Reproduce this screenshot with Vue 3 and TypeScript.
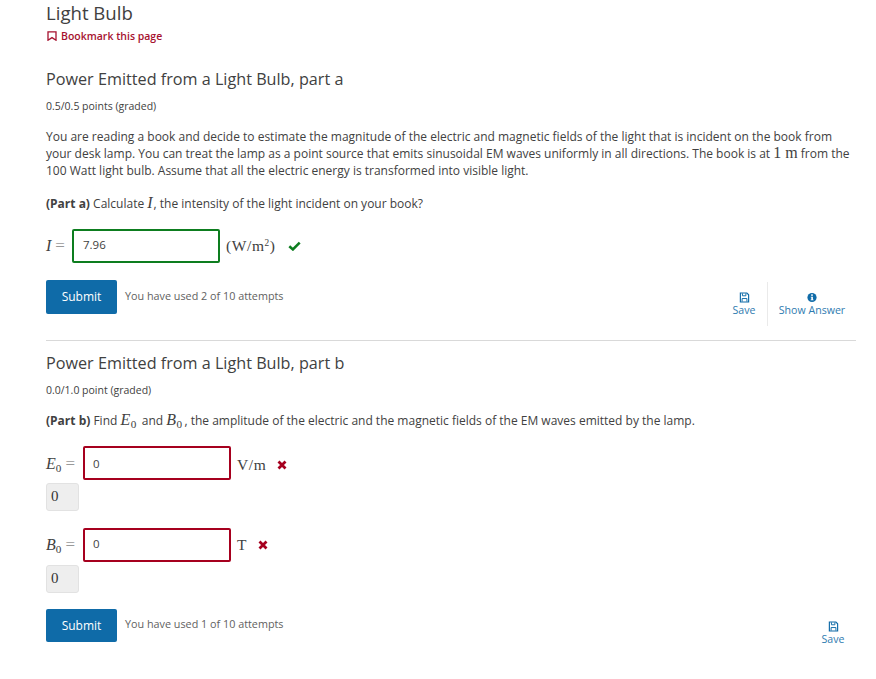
<script setup lang="ts">
const floppy = "M2 1.5h9.5L14 4v10.5H2z";
</script>

<template>
  <main class="page">
    <h1 class="title">Light Bulb</h1>
    <a class="bookmark">
      <svg class="bm-icon" viewBox="0 0 10 10" width="10" height="10"><path d="M1 .8h8v8.4L5 6.6 1 9.2z" fill="none" stroke="#a6112f" stroke-width="1.3"/></svg>
      <span>Bookmark this page</span>
    </a>

    <section class="problem first">
      <h2 class="heading">Power Emitted from a Light Bulb, part a</h2>
      <p class="points">0.5/0.5 points (graded)</p>
      <p class="text para">You are reading a book and decide to estimate the magnitude of the electric and magnetic fields of the light that is incident on the book from your desk lamp. You can treat the lamp as a point source that emits sinusoidal EM waves uniformly in all directions. The book is at <span class="math big">1 m</span> from the 100 Watt light bulb. Assume that all the electric energy is transformed into visible light.</p>
      <p class="text question"><b>(Part a)</b> Calculate <i class="math big wide-i">I</i>, the intensity of the light incident on your book?</p>

      <div class="answer row-a">
        <span class="math label"><span class="sym"><i>I</i></span><span class="eq">=</span></span>
        <div class="input ok">7.96</div>
        <span class="math unit">(W/m<sup>2</sup>)</span>
        <svg class="mark" viewBox="0 0 13 10" width="13" height="10"><path d="M1.3 5.2l3.6 3.2 6.8-6.8" fill="none" stroke="#0d7d1f" stroke-width="2.6"/></svg>
      </div>

      <div class="actions one">
        <button class="submit">Submit</button>
        <span class="attempts">You have used 2 of 10 attempts</span>
        <div class="tools">
          <div class="tool save">
            <svg viewBox="0 0 16 16" width="11" height="11"><path :d="floppy" fill="none" stroke="#0f6ba8" stroke-width="1.7"/><path d="M5 2v3.5h5V2M4.5 14V9.5h7V14" fill="none" stroke="#0f6ba8" stroke-width="1.4"/></svg>
            <span>Save</span>
          </div>
          <div class="tool show">
            <svg viewBox="0 0 12 12" width="10" height="10"><circle cx="6" cy="6" r="5.5" fill="#0f6ba8"/><rect x="5" y="2.2" width="2" height="1.8" fill="#fff"/><path d="M4.5 5h2.6v3.4h.7v1H4.4v-1h.8V6h-.7z" fill="#fff"/></svg>
            <span>Show Answer</span>
          </div>
        </div>
      </div>
    </section>

    <hr class="rule" />

    <section class="problem">
      <h2 class="heading">Power Emitted from a Light Bulb, part b</h2>
      <p class="points">0.0/1.0 point (graded)</p>
      <p class="text question-b"><b>(Part b)</b> Find <span class="math big inl"><i>E</i><sub>0</sub></span> and <span class="math big inl"><i>B</i><sub>0</sub></span>, the amplitude of the electric and the magnetic fields of the EM waves emitted by the lamp.</p>

      <div class="answer row-e">
        <span class="math label"><span class="sym"><i>E</i><sub>0</sub></span><span class="eq">=</span></span>
        <div class="input bad">0</div>
        <span class="math unit">V/m</span>
        <svg class="mark x" viewBox="0 0 10 10" width="10" height="10"><path d="M1.5 1.5l7 7m0-7l-7 7" stroke="#a6001e" stroke-width="2.8"/></svg>
      </div>
      <div class="preview math">0</div>

      <div class="answer row-b">
        <span class="math label"><span class="sym"><i>B</i><sub>0</sub></span><span class="eq">=</span></span>
        <div class="input bad">0</div>
        <span class="math unit">T</span>
        <svg class="mark x" viewBox="0 0 10 10" width="10" height="10"><path d="M1.5 1.5l7 7m0-7l-7 7" stroke="#a6001e" stroke-width="2.8"/></svg>
      </div>
      <div class="preview math">0</div>

      <div class="actions two">
        <button class="submit">Submit</button>
        <span class="attempts">You have used 1 of 10 attempts</span>
        <div class="tools">
          <div class="tool save last">
            <svg viewBox="0 0 16 16" width="11" height="11"><path :d="floppy" fill="none" stroke="#0f6ba8" stroke-width="1.7"/><path d="M5 2v3.5h5V2M4.5 14V9.5h7V14" fill="none" stroke="#0f6ba8" stroke-width="1.4"/></svg>
            <span>Save</span>
          </div>
        </div>
      </div>
    </section>
  </main>
</template>

<style scoped>
.page {
  box-sizing: border-box;
  width: 876px;
  min-height: 679px;
  padding: 1px 20px 0 46px;
  background: #fff;
  color: #414141;
  font-family: "Open Sans", sans-serif;
}
.title {
  margin: 0;
  font-size: 18.6px;
  line-height: 24px;
  font-weight: 400;
  color: #414141;
}
.bookmark {
  display: flex;
  align-items: center;
  gap: 4px;
  margin-top: 3px;
  height: 16px;
  font-size: 10.5px;
  font-weight: 600;
  color: #a6112f;
}
.bm-icon { margin-left: 1px; }
.problem.first { margin-top: 24px; }
.heading {
  margin: 0;
  font-size: 16.2px;
  line-height: 22px;
  font-weight: 400;
  color: #414141;
}
.points {
  margin: 9px 0 0;
  font-size: 10.5px;
  line-height: 14px;
  color: #414141;
}
.text {
  font-size: 12px;
  line-height: 17px;
  color: #414141;
}
.text b { font-weight: 700; }
.para { margin: 15px 0 0; width: 810px; }
.question { margin: 16px 0 0; }
.question-b { margin: 15px 0 0; }
.math { font-family: "Liberation Serif", serif; }
.big { font-size: 16px; line-height: 1; }
.wide-i { margin-right: 1px; }
.inl { margin: 0 2px 0 0; letter-spacing: .4px; }
sub { font-size: 0.7em; line-height: 0; vertical-align: -0.25em; }
sup { font-size: 0.6em; line-height: 0; vertical-align: 0.55em; }
.answer { display: flex; align-items: center; height: 34px; }
.row-a { margin-top: 17px; }
.row-e { margin-top: 17px; }
.row-b { margin-top: 17px; }
.label {
  display: flex;
  align-items: center;
  gap: 4px;
  font-size: 16px;
  white-space: nowrap;
}
.row-a .label { width: 26px; }
.row-e .label, .row-b .label { width: 37px; }
.eq { color: #999; font-size: 17px; }
.input {
  box-sizing: border-box;
  width: 148px;
  height: 34px;
  padding-left: 9px;
  display: flex;
  align-items: center;
  font-size: 11.5px;
  border: 2px solid;
  border-radius: 2px;
  background: #fff;
  color: #414141;
}
.row-a .input, .row-b .input { padding-bottom: 3px; }
.row-e .input { padding-left: 8px; }
.row-b .input { padding-left: 8px; }
.ok { border-color: #0d7d1f; }
.bad { border-color: #a6001e; }
.unit { margin-left: 6px; font-size: 15.5px; letter-spacing: .6px; color: #414141; }
.mark { margin-left: 12px; }
.x { margin-left: 11px; }
.row-e .unit, .row-e .mark { margin-top: 4px; }
.row-e .label { padding-top: 1px; }
.preview {
  box-sizing: border-box;
  width: 33px;
  height: 28px;
  margin-top: 3px;
  padding: 0 0 1px 4px;
  display: flex;
  align-items: center;
  background: #eee;
  border: 1px solid #e2e2e2;
  border-radius: 3px;
  font-size: 15px;
  color: #333;
}
.actions { display: flex; align-items: flex-start; }
.one { margin-top: 17px; }
.two { margin-top: 16px; }
.submit {
  width: 71px;
  height: 34px;
  padding: 0 0 1px;
  border: none;
  border-radius: 2px;
  background: #0f6ba8;
  color: #fff;
  font-family: inherit;
  font-size: 12px;
}
.two .submit { height: 33px; }
.attempts {
  margin-left: 8px;
  line-height: 32px;
  font-size: 10.8px;
  color: #5f5f5f;
}
.two .attempts { margin-top: -1px; }
.tools { display: flex; margin-left: auto; margin-top: 2px; }
.tool {
  display: flex;
  flex-direction: column;
  align-items: center;
  font-size: 10.6px;
  line-height: 14px;
  color: #2f7bb0;
  height: 44px;
  padding-top: 10px;
  box-sizing: border-box;
}
.tool svg { height: 11px; }
.save { width: 44px; margin-right: 1px; }
.show { width: 89px; border-left: 1px solid #eaeaea; }
.last { width: 46px; margin-right: 0; }
.rule { margin: 14px 0 0; border: 0; border-top: 1px solid #d9d9d9; }
hr + .problem { margin-top: 11px; }
</style>
